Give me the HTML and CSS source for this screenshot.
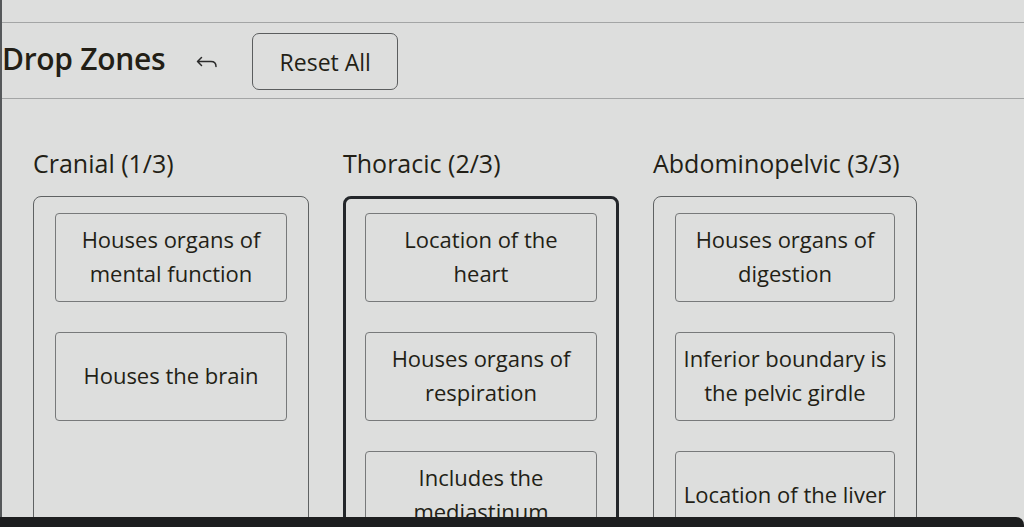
FILE: index.html
```html
<!DOCTYPE html>
<html lang="en">
<head>
<meta charset="utf-8">
<title>Drop Zones</title>
<link rel="stylesheet" href="styles.css">
</head>
<body>
<div class="page">
  <div class="topline"></div>
  <header class="header">
    <h1 class="title">Drop Zones</h1>
    <svg class="undo" width="22" height="12" viewBox="0 0 22 12" aria-hidden="true">
      <path d="M5.5 1.5 L1.5 5.5 L5.5 9.5 M1.5 5.5 H15 Q20 5.5 20 10.5" fill="none" stroke="#2a2a2a" stroke-width="1.5" stroke-linecap="round" stroke-linejoin="round"/>
    </svg>
    <button class="reset">Reset All</button>
  </header>
  <main class="columns">
    <section class="col">
      <h2 class="col-title">Cranial (1/3)</h2>
      <div class="zone">
        <div class="card">Houses organs of<br>mental function</div>
        <div class="card">Houses the brain</div>
      </div>
    </section>
    <section class="col">
      <h2 class="col-title">Thoracic (2/3)</h2>
      <div class="zone zone-active">
        <div class="card">Location of the<br>heart</div>
        <div class="card">Houses organs of<br>respiration</div>
        <div class="card">Includes the<br>mediastinum</div>
      </div>
    </section>
    <section class="col">
      <h2 class="col-title">Abdominopelvic (3/3)</h2>
      <div class="zone">
        <div class="card">Houses organs of<br>digestion</div>
        <div class="card">Inferior boundary is<br>the pelvic girdle</div>
        <div class="card">Location of the liver</div>
      </div>
    </section>
  </main>
</div>
<div class="bezel"></div>
</body>
</html>
```

FILE: styles.css
```css
html, body {
  margin: 0;
  padding: 0;
  height: 100%;
  overflow: hidden;
  background: #dddedd;
}

body {
  font-family: "Open Sans", "Liberation Sans", sans-serif;
  color: #231f16;
}

.page {
  border-left: 2px solid #55585a;
  min-height: 100%;
}

.topline {
  height: 22px;
  border-bottom: 1px solid #a3a5a5;
}

.header {
  height: 75px;
  display: flex;
  align-items: center;
  border-bottom: 1px solid #a3a5a5;
}

.title {
  margin: 0 0 4px 0;
  font-size: 30px;
  font-weight: 600;
  letter-spacing: -0.3px;
}

.undo {
  margin-left: 31px;
  margin-top: 2px;
}

.reset {
  margin-left: 34px;
  margin-top: 2px;
  width: 146px;
  height: 57px;
  border: 1px solid #5b5d5e;
  border-radius: 7px;
  background: transparent;
  font-family: inherit;
  font-size: 23px;
  color: #231f16;
  padding: 0;
}

.columns {
  display: grid;
  grid-template-columns: 276px 276px 264px;
  column-gap: 34px;
  padding-left: 31px;
}

.col-title {
  margin: 50px 0 19px 0;
  font-size: 25px;
  line-height: 28px;
  font-weight: 500;
  white-space: nowrap;
}

.zone {
  height: 420px;
  border: 1px solid #5f6263;
  border-radius: 8px;
  padding: 16px 21px 0 21px;
  display: flex;
  flex-direction: column;
  gap: 30px;
}

.zone-active {
  border: 3px solid #23262a;
  padding: 14px 19px 0 19px;
}

.card {
  height: 84px;
  flex: none;
  border: 1px solid #77797a;
  border-radius: 4px;
  display: flex;
  align-items: center;
  justify-content: center;
  text-align: center;
  font-size: 22px;
  line-height: 34px;
  padding-bottom: 3px;
}

.bezel {
  position: fixed;
  left: 0;
  right: 0;
  bottom: 0;
  height: 10px;
  background: #1d1e1f;
  border-top-right-radius: 8px;
}
```
